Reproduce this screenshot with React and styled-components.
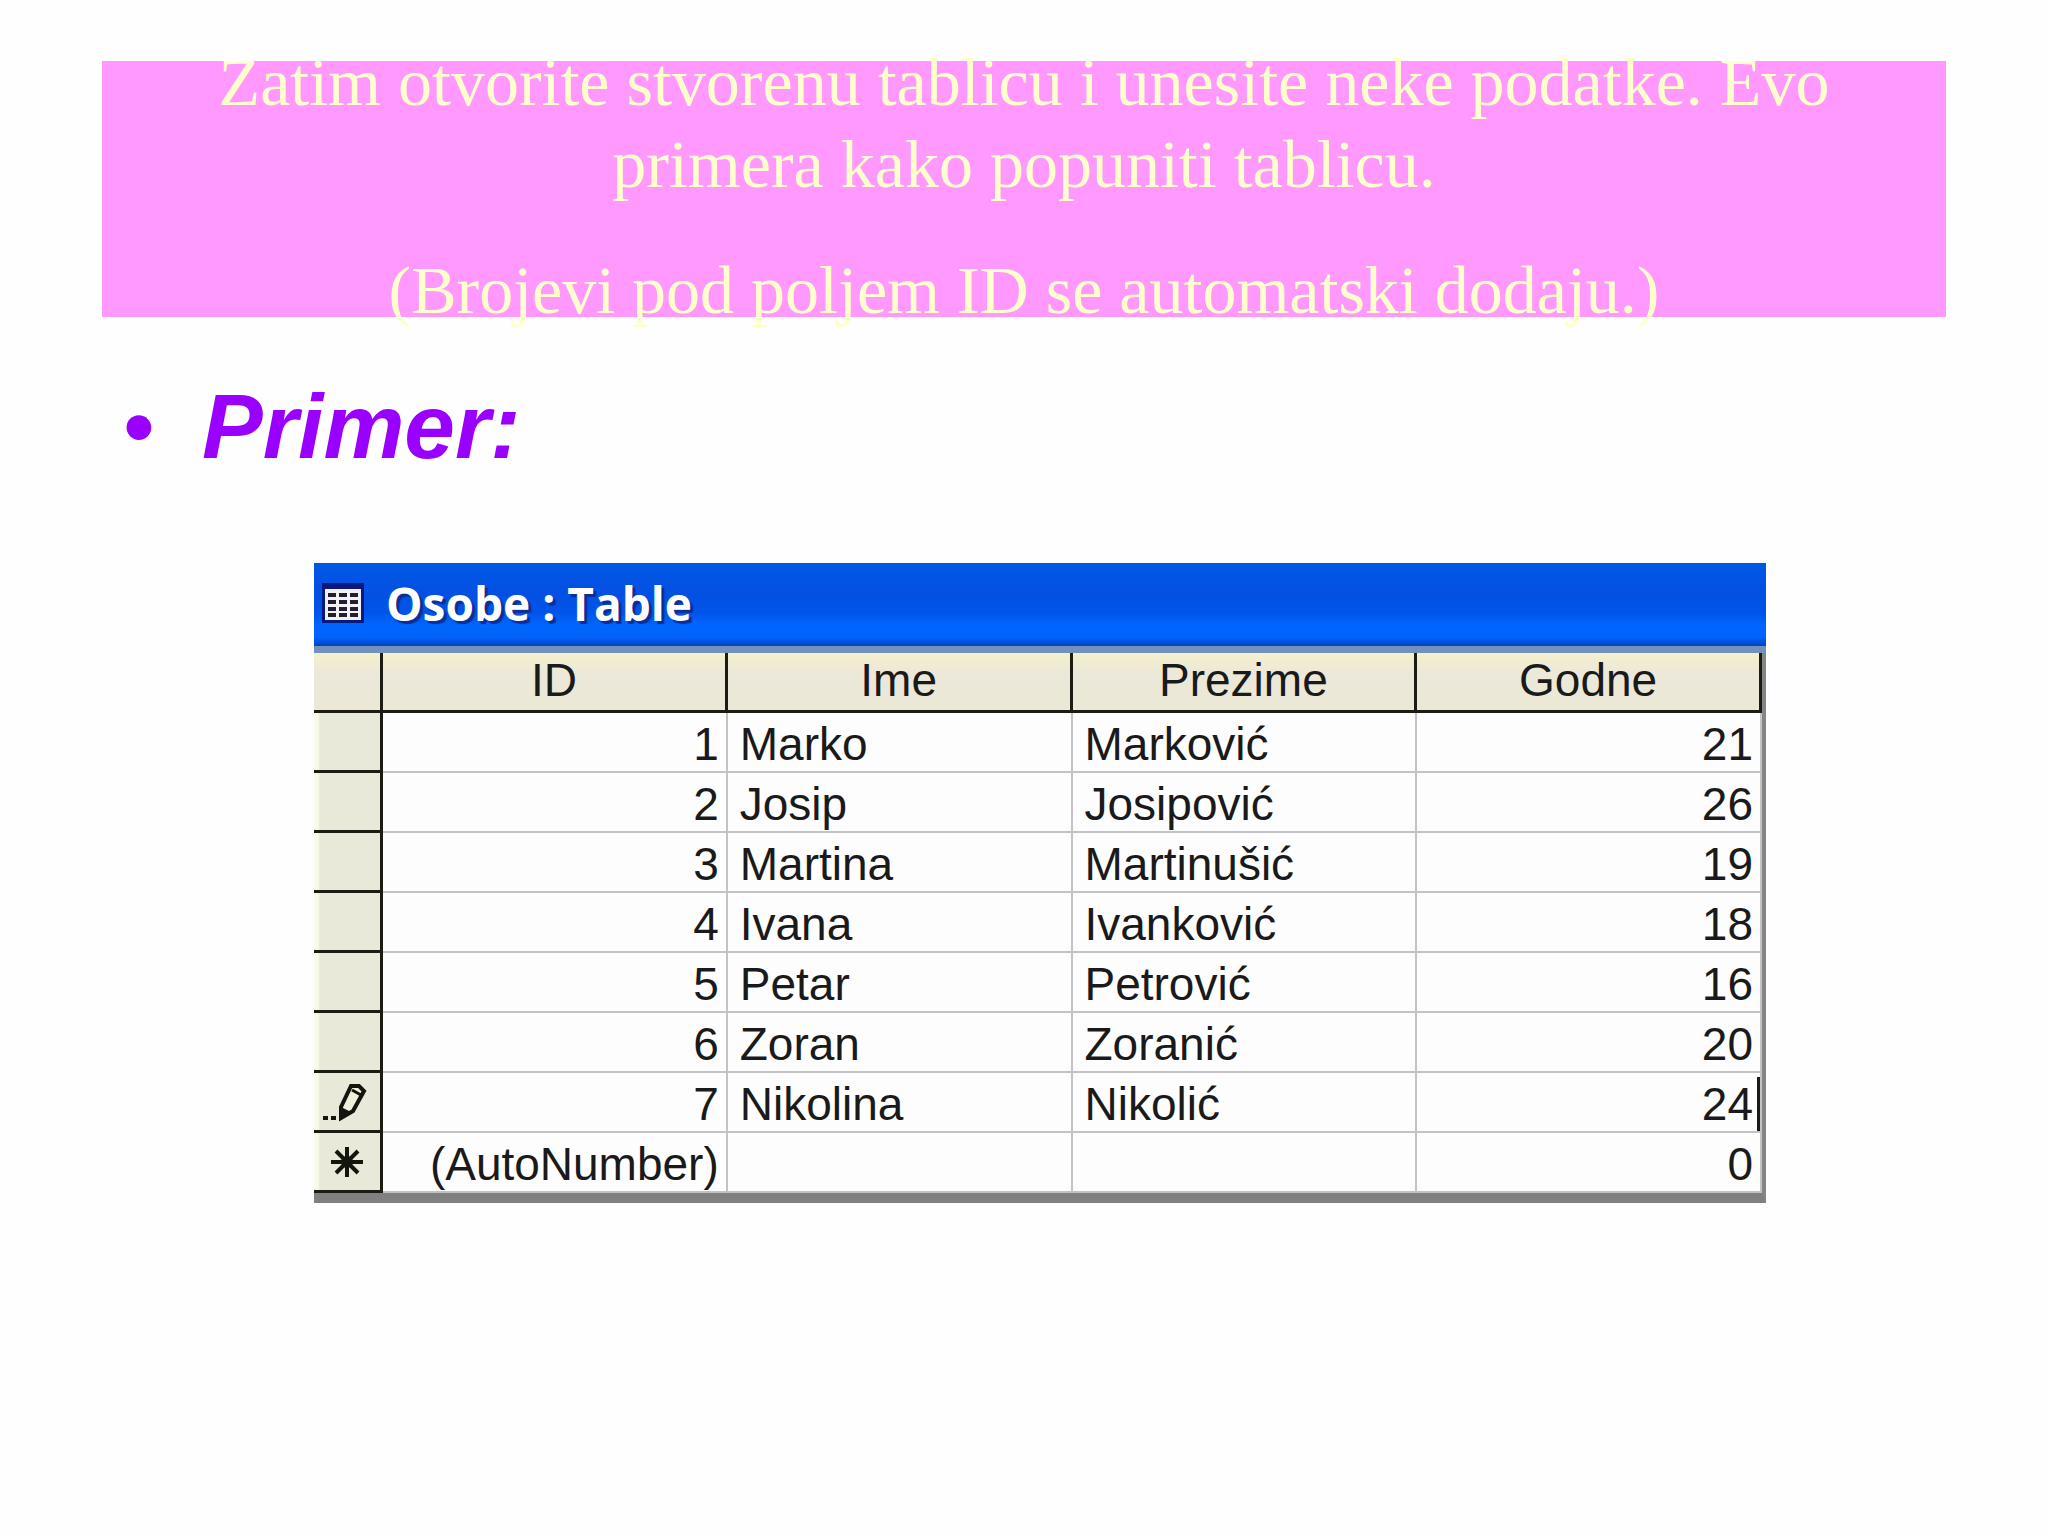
import styled, { createGlobalStyle } from 'styled-components';

const GlobalStyle = createGlobalStyle`
    body {
        margin: 0;
        background: #fefefe;
    }
`;

const Slide = styled.main`
    display: flex;
    flex-direction: column;
    padding: 61px 0 80px;
`;

const Banner = styled.header`
    display: flex;
    box-sizing: border-box;
    flex-direction: column;
    justify-content: center;
    gap: 44px;
    height: 256px;
    margin: 0 5%;
    padding-bottom: 6px;
    background: #ff99ff;
    color: #ffffcc;
    font-family: "Liberation Serif", "Times New Roman", serif;
    font-size: 68px;
    line-height: 82px;
    text-align: center;
`;

const BannerTitle = styled.h1`
    margin: 0;
    padding: 0 100px;
    font-size: inherit;
    font-weight: normal;
`;

const BannerNote = styled.p`
    margin: 0;
`;

const Points = styled.ul`
    margin: 0;
    padding: 58px 123px 0;
    list-style: none;
    color: #9900ff;
    font-family: "Liberation Sans", Arial, sans-serif;
    font-size: 91px;
    line-height: 104px;
`;

const Point = styled.li`
    display: flex;
    align-items: center;
    font-style: italic;
    font-weight: bold;

    &::before {
        content: "•";
        width: 79px;
        font-style: normal;
        font-weight: normal;
    }
`;

const Window = styled.section`
    margin: 84px 282px 0 314px;
    color: #1a1a1a;
    font-family: "Liberation Sans", Arial, sans-serif;
    font-size: 46px;
    line-height: 54px;
`;

const TitleBar = styled.header`
    display: flex;
    align-items: center;
    gap: 22px;
    height: 83px;
    padding: 0 8px;
    border-bottom: 7px solid #7391bd;
    background: linear-gradient(#0058e6, #0450e2 35%, #0054ea 60%, #0066ff 75%, #0062fb 90%, #0840bc);
`;

const WindowTitle = styled.h2`
    margin: 0;
    padding-bottom: 4px;
    color: #fff;
    font-family: "Open Sans", "Noto Sans", sans-serif;
    font-size: 46px;
    font-weight: bold;
    text-shadow: 3px 3px 1px #0a2f96;
`;

const Sheet = styled.table`
    width: 100%;
    table-layout: fixed;
    border-collapse: separate;
    border-spacing: 0;
    border-right: 4px solid #858585;
    border-bottom: 10px solid #808080;
    background: #fefdfe;
`;

const SelectorCol = styled.col`
    width: 69px;
`;

const HeadCell = styled.th`
    box-sizing: border-box;
    height: 60px;
    padding: 0 0 3px;
    border-right: 3px solid #1c1c14;
    border-bottom: 3px solid #1c1c14;
    background: linear-gradient(#f5f0cc, #ece8da 35%, #ebe8d6);
    font-weight: normal;
`;

const Selector = styled.th`
    box-sizing: border-box;
    height: 60px;
    padding: 0;
    border-right: 3px solid #1c1c14;
    border-bottom: 3px solid #1c1c14;
    background: linear-gradient(90deg, #fafae8 4px, #e8e9d9 6px);

    svg {
        display: block;
        margin: 0 auto;
    }
`;

const Cell = styled.td`
    box-sizing: border-box;
    height: 60px;
    padding: ${({ $editing }) => ($editing ? '4px 0 0' : '4px 7px 0 12px')};
    border-right: 2px solid #c4c2c4;
    border-bottom: 2px solid #c4c2c4;
    text-align: ${({ $number }) => ($number ? 'right' : 'left')};
`;

const CellInput = styled.input`
    display: block;
    box-sizing: border-box;
    width: 100%;
    height: 54px;
    padding: 0 4px 0 12px;
    border: 0;
    border-right: 3px solid #1a1a1a;
    outline: 0;
    background: transparent;
    color: inherit;
    font: inherit;
    text-align: right;
`;

const people = [
    { id: 1, ime: 'Marko', prezime: 'Marković', godne: 21 },
    { id: 2, ime: 'Josip', prezime: 'Josipović', godne: 26 },
    { id: 3, ime: 'Martina', prezime: 'Martinušić', godne: 19 },
    { id: 4, ime: 'Ivana', prezime: 'Ivanković', godne: 18 },
    { id: 5, ime: 'Petar', prezime: 'Petrović', godne: 16 },
    { id: 6, ime: 'Zoran', prezime: 'Zoranić', godne: 20 },
    { id: 7, ime: 'Nikolina', prezime: 'Nikolić', godne: 24, editing: true },
];

function TableIcon() {
    return (
        <svg width="42" height="44" viewBox="0 0 42 44" aria-hidden="true">
            <rect width="42" height="40" fill="#0a1a7c" />
            <rect x="3" y="6" width="36" height="31" fill="#f4f1f4" />
            {[10, 17, 24, 30].map((y) =>
                [6, 17, 28].map((x) => (
                    <rect key={`${x}-${y}`} x={x} y={y} width="8" height="4" fill="#222030" />
                ))
            )}
        </svg>
    );
}

function PencilIcon() {
    return (
        <svg width="50" height="44" viewBox="0 0 50 44" aria-hidden="true">
            <path d="M19 27L29 6H37L42 11L31 31L19 38Z" fill="#eef0dc" stroke="#15150f" strokeWidth="4" />
            <path d="M17 26L29 32L17 41Z" fill="#15150f" />
            <path d="M30 10L39 15" stroke="#15150f" strokeWidth="3" />
            <path d="M1 38h5M9 38h5" stroke="#15150f" strokeWidth="4" />
        </svg>
    );
}

function NewRowIcon() {
    return (
        <svg width="34" height="32" viewBox="0 0 34 32" aria-hidden="true">
            <path d="M17 1V31M1 16H33M6 5L28 27M28 5L6 27" stroke="#15150f" strokeWidth="4" />
            <circle cx="17" cy="16" r="6" fill="#15150f" />
        </svg>
    );
}

function PeopleTable() {
    return (
        <Sheet aria-labelledby="window-title">
            <colgroup>
                <SelectorCol />
                <col />
                <col />
                <col />
                <col />
            </colgroup>
            <thead>
                <tr>
                    <HeadCell />
                    <HeadCell scope="col">ID</HeadCell>
                    <HeadCell scope="col">Ime</HeadCell>
                    <HeadCell scope="col">Prezime</HeadCell>
                    <HeadCell scope="col">Godne</HeadCell>
                </tr>
            </thead>
            <tbody>
                {people.map(({ id, ime, prezime, godne, editing }) => (
                    <tr key={id}>
                        <Selector>{editing && <PencilIcon />}</Selector>
                        <Cell $number>{id}</Cell>
                        <Cell>{ime}</Cell>
                        <Cell>{prezime}</Cell>
                        <Cell $number $editing={editing}>
                            {editing ? <CellInput aria-label="Godne" defaultValue={godne} /> : godne}
                        </Cell>
                    </tr>
                ))}
                <tr>
                    <Selector><NewRowIcon /></Selector>
                    <Cell $number>(AutoNumber)</Cell>
                    <Cell />
                    <Cell />
                    <Cell $number>0</Cell>
                </tr>
            </tbody>
        </Sheet>
    );
}

function App() {
    return (
        <Slide>
            <GlobalStyle />
            <Banner>
                <BannerTitle>
                    Zatim otvorite stvorenu tablicu i unesite neke podatke. Evo primera kako popuniti tablicu.
                </BannerTitle>
                <BannerNote>(Brojevi pod poljem ID se automatski dodaju.)</BannerNote>
            </Banner>
            <Points>
                <Point>Primer:</Point>
            </Points>
            <Window>
                <TitleBar>
                    <TableIcon />
                    <WindowTitle id="window-title">Osobe : Table</WindowTitle>
                </TitleBar>
                <PeopleTable />
            </Window>
        </Slide>
    );
}

export default App;
